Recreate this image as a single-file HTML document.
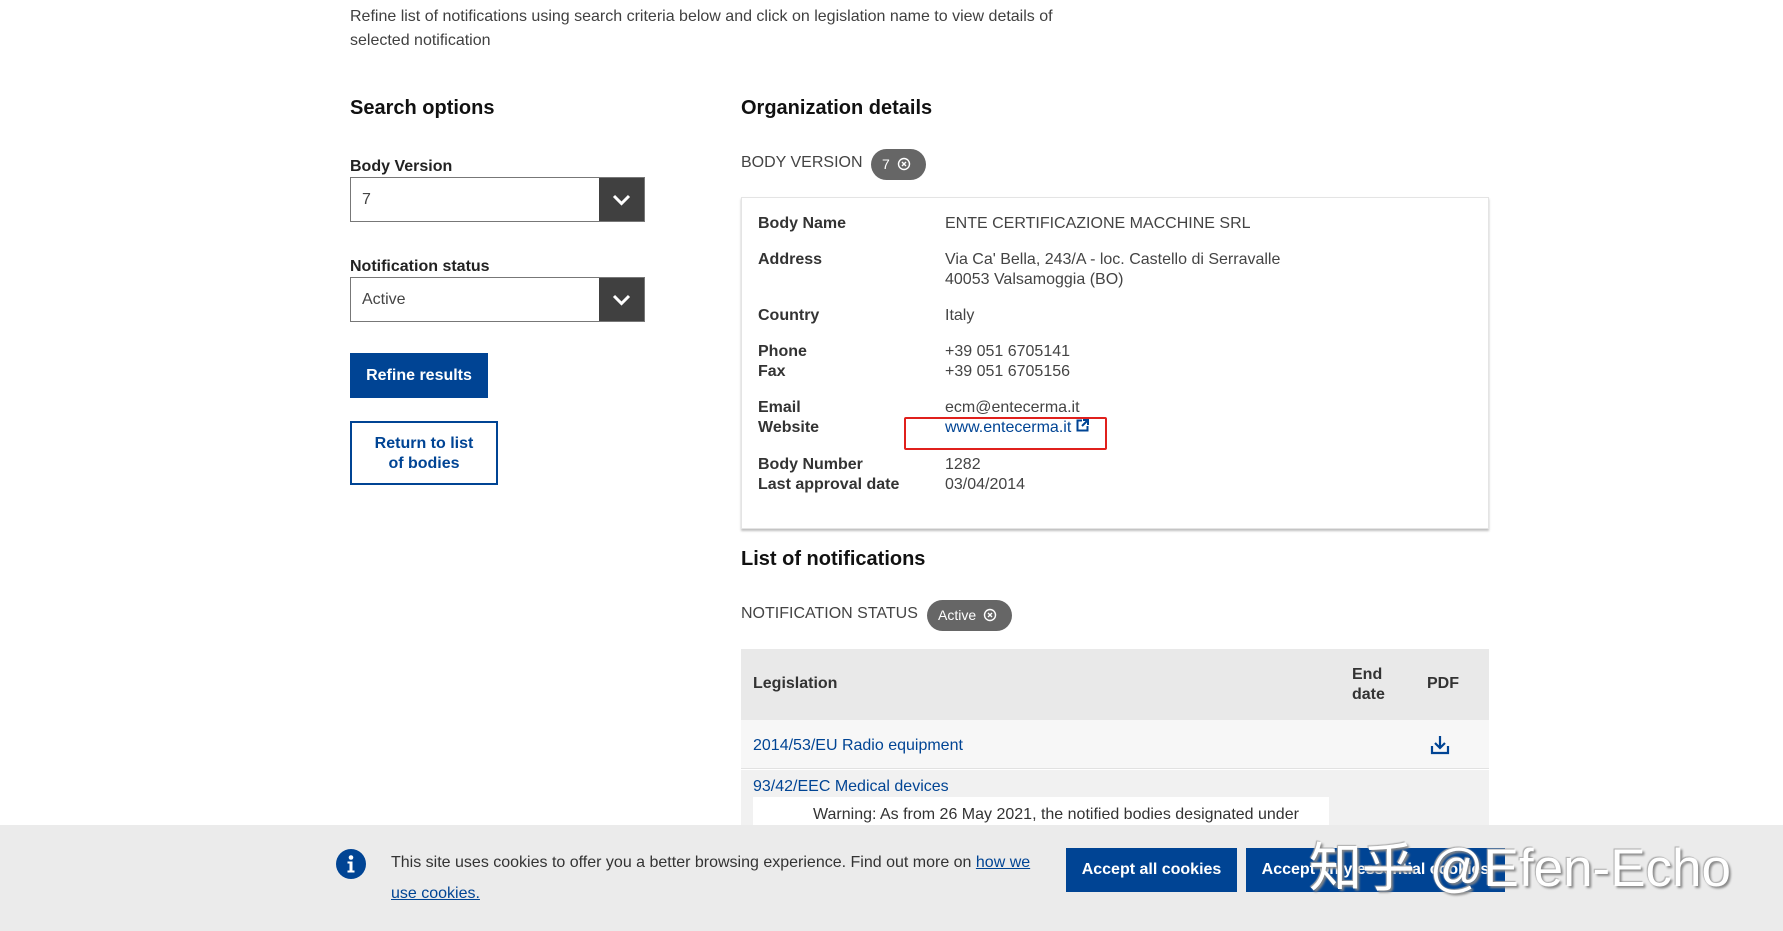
<!DOCTYPE html>
<html><head><meta charset="utf-8"><style>
*{margin:0;padding:0;box-sizing:border-box}
body{width:1783px;height:931px;overflow:hidden;background:#fff;font-family:"Liberation Sans",Arial,sans-serif;color:#333;position:relative}
.a{position:absolute;white-space:nowrap}
.t{font-size:16px;color:#404040}
.b{font-weight:bold;color:#222}
h2{position:absolute;font-size:20px;font-weight:bold;color:#111}
.sel{position:absolute;left:350px;width:295px;height:45px;border:1px solid #777;background:#fff}
.sel span{position:absolute;left:11px;top:13px;font-size:16px;color:#444}
.sel i{position:absolute;right:0;top:0;width:45px;height:43px;background:#404040}
.pill{position:absolute;height:31px;border-radius:16px;background:#666;color:#fff;font-size:14px;line-height:31px;padding-left:11px}
.lbl{position:absolute;left:758px;font-size:16px;font-weight:bold;color:#333}
.val{position:absolute;left:945px;font-size:16px;color:#444}
.btn{position:absolute;background:#004494;color:#fff;font-weight:bold;font-size:16px;text-align:center}
</style></head><body>
<div class="a t" style="left:350px;top:8px">Refine list of notifications using search criteria below and click on legislation name to view details of</div>
<div class="a t" style="left:350px;top:32px">selected notification</div>

<h2 style="left:350px;top:97px">Search options</h2>
<h2 style="left:741px;top:97px">Organization details</h2>

<div class="a b" style="left:350px;top:158px;font-size:16px">Body Version</div>
<div class="sel" style="top:177px"><span>7</span><i><svg width="45" height="43"><path d="M15 18l7.5 7.5L30 18" stroke="#fff" stroke-width="3" fill="none"/></svg></i></div>
<div class="a b" style="left:350px;top:258px;font-size:16px">Notification status</div>
<div class="sel" style="top:277px"><span>Active</span><i><svg width="45" height="43"><path d="M15 18l7.5 7.5L30 18" stroke="#fff" stroke-width="3" fill="none"/></svg></i></div>
<div class="btn" style="left:350px;top:353px;width:138px;height:45px;line-height:45px">Refine results</div>
<div class="a" style="left:350px;top:421px;width:148px;height:64px;border:2px solid #004494;color:#004494;font-weight:bold;font-size:16px;text-align:center;line-height:20px;padding-top:11px">Return to list<br>of bodies</div>

<div class="a" style="left:741px;top:154px;font-size:16px;color:#444">BODY VERSION</div>
<div class="pill" style="left:871px;top:149px;width:55px">7 <svg width="14" height="14" style="vertical-align:-2px;margin-left:3px"><circle cx="7" cy="7" r="5.5" stroke="#fff" stroke-width="1.4" fill="none"/><path d="M5 5l4 4M9 5l-4 4" stroke="#fff" stroke-width="1.4"/></svg></div>

<div class="a" style="left:741px;top:197px;width:748px;height:332px;background:#fff;border:1px solid #e4e4e4;box-shadow:0 2px 2px rgba(0,0,0,.25)"></div>
<div class="lbl" style="top:215px">Body Name</div><div class="val" style="top:215px">ENTE CERTIFICAZIONE MACCHINE SRL</div>
<div class="lbl" style="top:251px">Address</div><div class="val" style="top:251px">Via Ca' Bella, 243/A - loc. Castello di Serravalle</div>
<div class="val" style="top:271px">40053 Valsamoggia (BO)</div>
<div class="lbl" style="top:307px">Country</div><div class="val" style="top:307px">Italy</div>
<div class="lbl" style="top:343px">Phone</div><div class="val" style="top:343px">+39 051 6705141</div>
<div class="lbl" style="top:363px">Fax</div><div class="val" style="top:363px">+39 051 6705156</div>
<div class="lbl" style="top:399px">Email</div><div class="val" style="top:399px">ecm@entecerma.it</div>
<div class="lbl" style="top:419px">Website</div><div class="val" style="top:419px;color:#004494">www.entecerma.it <svg width="13" height="13" style="vertical-align:0"><path d="M6 1.5H1.5v10h10V7" stroke="#004494" stroke-width="2" fill="none"/><path d="M7 1h5v5M12 1L6 7" stroke="#004494" stroke-width="2" fill="none"/></svg></div>
<div class="a" style="left:904px;top:417px;width:203px;height:33px;border:2px solid #e0201c;border-radius:2px"></div>
<div class="lbl" style="top:456px">Body Number</div><div class="val" style="top:456px">1282</div>
<div class="lbl" style="top:476px">Last approval date</div><div class="val" style="top:476px">03/04/2014</div>

<h2 style="left:741px;top:548px">List of notifications</h2>
<div class="a" style="left:741px;top:605px;font-size:16px;color:#444">NOTIFICATION STATUS</div>
<div class="pill" style="left:927px;top:600px;width:85px">Active <svg width="14" height="14" style="vertical-align:-2px;margin-left:3px"><circle cx="7" cy="7" r="5.5" stroke="#fff" stroke-width="1.4" fill="none"/><path d="M5 5l4 4M9 5l-4 4" stroke="#fff" stroke-width="1.4"/></svg></div>

<div class="a" style="left:741px;top:649px;width:748px;height:71px;background:#e9e9e9"></div>
<div class="a b" style="left:753px;top:675px;font-size:16px;color:#333">Legislation</div>
<div class="a b" style="left:1352px;top:665px;font-size:16px;color:#333;line-height:20px">End<br>date</div>
<div class="a b" style="left:1427px;top:675px;font-size:16px;color:#333">PDF</div>
<div class="a" style="left:741px;top:720px;width:748px;height:49px;background:#f7f7f7;border-bottom:1px solid #e2e2e2"></div>
<div class="a" style="left:753px;top:737px;font-size:16px;color:#004494">2014/53/EU Radio equipment</div>
<svg class="a" style="left:1430px;top:735px" width="20" height="20"><path d="M10 1v11M5 8l5 5 5-5" stroke="#004494" stroke-width="2.2" fill="none"/><path d="M2 11v7h16v-7" stroke="#004494" stroke-width="2.2" fill="none"/></svg>
<div class="a" style="left:741px;top:770px;width:748px;height:60px;background:#f1f1f1"></div>
<div class="a" style="left:753px;top:778px;font-size:16px;color:#004494">93/42/EEC Medical devices</div>
<div class="a" style="left:753px;top:797px;width:576px;height:40px;background:#fff"></div>
<div class="a" style="left:813px;top:806px;font-size:16px;color:#333">Warning: As from 26 May 2021, the notified bodies designated under</div>

<div class="a" style="left:0;top:825px;width:1783px;height:106px;background:#ebebeb"></div>
<svg class="a" style="left:336px;top:849px" width="30" height="30"><circle cx="15" cy="15" r="15" fill="#004494"/><circle cx="15" cy="8.5" r="2.3" fill="#fff"/><path d="M11.5 12.5h5v9h2v2h-7v-2h2v-7h-2z" fill="#fff"/></svg>
<div class="a" style="left:391px;top:854px;font-size:16px;color:#333">This site uses cookies to offer you a better browsing experience. Find out more on <span style="color:#004494;text-decoration:underline">how we</span></div>
<div class="a" style="left:391px;top:885px;font-size:16px;color:#004494;text-decoration:underline">use cookies.</div>
<div class="btn" style="left:1066px;top:848px;width:171px;height:44px;line-height:44px">Accept all cookies</div>
<div class="btn" style="left:1246px;top:848px;width:259px;height:44px;line-height:44px">Accept only essential cookies</div>
<div class="a" style="left:1309px;top:826px;font-size:53px;color:#fff;font-family:'Liberation Sans','Noto Sans CJK SC',sans-serif;text-shadow:2px 2px 2px #888,-1px -1px 1px #aaa">知乎 @Efen-Echo</div>
</body></html>
